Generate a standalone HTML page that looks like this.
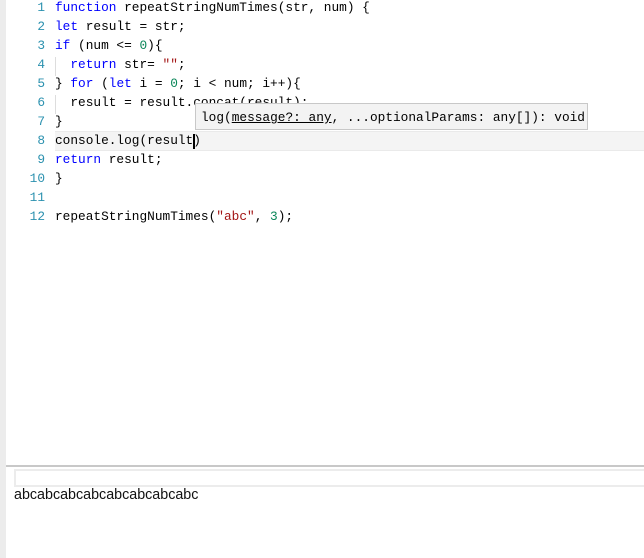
<!DOCTYPE html><html><head><style>
body{margin:0;width:644px;height:558px;background:#fff;position:relative;overflow:hidden;font-family:"Liberation Mono",monospace;}
.strip{position:absolute;left:0;top:0;width:6px;height:558px;background:#ececec;}
.ln{position:absolute;left:6px;width:39px;text-align:right;color:#2b91af;font-size:12.8px;}
.cd{position:absolute;left:55px;font-size:12.8px;white-space:pre;color:#000;}
.k{color:#0000ff}.n{color:#098658}.s{color:#a31515}
.hl{position:absolute;left:55px;right:0;top:131px;height:18px;background:#f4f4f4;border-top:1px solid #eaeaea;border-bottom:1px solid #eaeaea}
.tip{position:absolute;left:195px;top:103px;width:393px;height:27px;background:#f3f3f3;border:1px solid #c8c8c8;font-size:12.8px;line-height:27px;padding-left:5px;box-sizing:border-box;white-space:pre}
.guide{position:absolute;left:55px;width:1px;height:19px;background:#ddd}
</style></head><body>
<div class="strip"></div>
<div class="hl"></div>
<div class="guide" style="top:57px"></div><div class="guide" style="top:95px"></div>
<div style="position:absolute;top:0;line-height:19px;left:0;right:0">
<div class="ln" style="top:-2px">1</div><div class="cd" style="top:-2px"><span class="k">function</span> repeatStringNumTimes(str, num) {</div>
<div class="ln" style="top:17px">2</div><div class="cd" style="top:17px"><span class="k">let</span> result = str;</div>
<div class="ln" style="top:36px">3</div><div class="cd" style="top:36px"><span class="k">if</span> (num &lt;= <span class="n">0</span>){</div>
<div class="ln" style="top:55px">4</div><div class="cd" style="top:55px">  <span class="k">return</span> str= <span class="s">""</span>;</div>
<div class="ln" style="top:74px">5</div><div class="cd" style="top:74px">} <span class="k">for</span> (<span class="k">let</span> i = <span class="n">0</span>; i &lt; num; i++){</div>
<div class="ln" style="top:93px">6</div><div class="cd" style="top:93px">  result = result.concat(result);</div>
<div class="ln" style="top:112px">7</div><div class="cd" style="top:112px">}</div>
<div class="ln" style="top:131px">8</div><div class="cd" style="top:131px">console.log(result)</div>
<div class="ln" style="top:150px">9</div><div class="cd" style="top:150px"><span class="k">return</span> result;</div>
<div class="ln" style="top:169px">10</div><div class="cd" style="top:169px">}</div>
<div class="ln" style="top:188px">11</div>
<div class="ln" style="top:207px">12</div><div class="cd" style="top:207px">repeatStringNumTimes(<span class="s">"abc"</span>, <span class="n">3</span>);</div>
</div>
<div style="position:absolute;left:193px;top:134px;width:2px;height:15px;background:#000"></div>
<div class="tip">log(<u>message?: any</u>, ...optionalParams: any[]): void</div>
<div style="position:absolute;left:6px;right:0;top:465px;height:2px;background:#c8c8c8"></div>
<div style="position:absolute;left:14px;right:-4px;top:469px;height:18px;border:2px solid #ececec;border-right:none;box-sizing:border-box"></div>
<div style="position:absolute;left:14px;top:487px;font-family:'Liberation Sans',sans-serif;font-size:14.3px;color:#111">abcabcabcabcabcabcabcabc</div>
</body></html>
